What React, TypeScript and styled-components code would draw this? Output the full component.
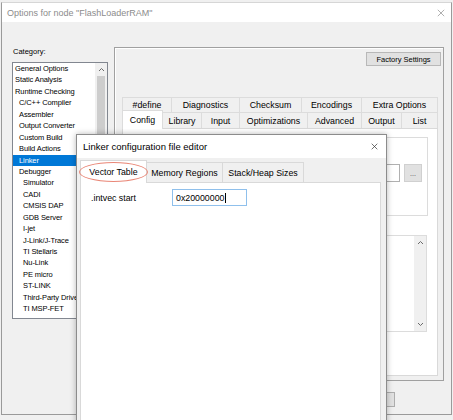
import React from 'react'
import styled, { createGlobalStyle } from 'styled-components'

const GlobalStyle = createGlobalStyle`
  html, body { margin: 0; padding: 0; }
  body {
    width: 453px;
    height: 420px;
    overflow: hidden;
    background: #f0f0f0;
    font-family: 'Liberation Sans', Arial, sans-serif;
    color: #000;
  }
  * { box-sizing: border-box; }
`

const Root = styled.div`
  position: relative;
  width: 453px;
  height: 420px;
  overflow: hidden;
  padding-top: 2px;
`

const Window = styled.div`
  width: 451px;
  height: 413px;
  margin-left: 1px;
  border: 1px solid #9a9a9a;
  border-top-color: #d6d6d6;
  background: #f0f0f0;
  display: flex;
  flex-direction: column;
`

const TitleBar = styled.div`
  height: 19px;
  flex: none;
  background: #fff;
  display: flex;
  align-items: center;
  justify-content: space-between;
  padding: 0 6px 0 5px;
  font-size: 9px;
  color: #8c8c8c;
`

const Body = styled.div`
  flex: 1;
  display: flex;
  flex-direction: column;
  padding: 25px 7px 0 10px;
`

const MainRow = styled.div`
  display: flex;
  gap: 6px;
`

const LeftCol = styled.div`
  width: 96px;
  display: flex;
  flex-direction: column;
`

const SmallLabel = styled.div`
  font-size: 7.5px;
  line-height: 10px;
  margin: 0 0 5px 1px;
`

const ListBox = styled.div`
  height: 257px;
  border: 1px solid #828790;
  background: #fff;
  display: flex;
`

const Items = styled.div`
  flex: 1;
  min-width: 0;
  overflow: hidden;
`

const Item = styled.div<{ $level: number; $selected?: boolean }>`
  height: 11.45px;
  line-height: 11.45px;
  font-size: 7.5px;
  letter-spacing: -0.1px;
  white-space: nowrap;
  padding-left: ${p => 2 + p.$level * 4}px;
  background: ${p => (p.$selected ? '#0078d7' : 'transparent')};
  color: ${p => (p.$selected ? '#fff' : '#000')};
`

const ScrollBar = styled.div<{ $height?: number }>`
  width: 12px;
  flex: none;
  background: #f0f0f0;
  display: flex;
  flex-direction: column;
  align-items: stretch;
`

const ScrollArrow = styled.div`
  height: 13px;
  flex: none;
  display: flex;
  align-items: center;
  justify-content: center;
`

const Thumb = styled.div<{ $h: number }>`
  height: ${p => p.$h}px;
  margin: 0 2px;
  background: #cdcdcd;
  flex: none;
`

const Spacer = styled.div`
  flex: 1;
`

const Frame = styled.div`
  width: 330px;
  height: 334px;
  border: 1px solid #a0a0a0;
  box-shadow: inset 1px 1px 0 #fff;
  padding: 4px 2px 0 7px;
  display: flex;
  flex-direction: column;
`

const FactoryButton = styled.div`
  align-self: flex-end;
  width: 75px;
  height: 14px;
  background: #e1e1e1;
  border: 1px solid #b8b8b8;
  font-size: 7.5px;
  display: flex;
  align-items: center;
  justify-content: center;
`

const TabControl = styled.div`
  margin-top: 31px;
  width: 316px;
  display: flex;
  flex-direction: column;
`

const TabRow = styled.div<{ $h: number }>`
  display: flex;
  height: ${p => p.$h}px;
  align-items: flex-end;
`

const Tab = styled.div<{ $w: number; $active?: boolean; $h: number }>`
  width: ${p => p.$w}px;
  height: ${p => (p.$active ? p.$h + 3 : p.$h)}px;
  margin-bottom: ${p => (p.$active ? -1 : 0)}px;
  position: relative;
  z-index: ${p => (p.$active ? 1 : 0)};
  background: ${p => (p.$active ? '#fff' : '#f0f0f0')};
  border: 1px solid #dcdcdc;
  border-bottom: none;
  margin-left: -1px;
  &:first-child { margin-left: 0; }
  font-size: 8.8px;
  display: flex;
  align-items: center;
  justify-content: center;
  white-space: nowrap;
`

const Page = styled.div`
  height: 248px;
  background: #fff;
  border: 1px solid #d9d9d9;
  padding: 4px 9px 0 4px;
  display: flex;
  flex-direction: column;
`

const Group = styled.fieldset`
  margin: 0;
  width: 301px;
  border: 1px solid #dcdcdc;
  padding: 0 5px 33px 6px;
  legend {
    font-size: 7.5px;
    padding: 0 2px;
    line-height: 9px;
  }
`

const FieldRow = styled.div`
  display: flex;
  gap: 4px;
  margin-top: 22px;
  height: 18px;
`

const TextField = styled.div`
  flex: 1;
  border: 1px solid #b0b0b0;
  background: #fff;
`

const SmallButton = styled.div`
  width: 18px;
  background: #e1e1e1;
  border: 1px solid #d0d0d0;
  font-size: 7px;
  display: flex;
  align-items: center;
  justify-content: center;
  color: #444;
`

const TextArea = styled.div`
  margin-top: 19px;
  width: 300px;
  height: 97px;
  border: 1px solid #dcdcdc;
  display: flex;
  justify-content: flex-end;
`

const ButtonRow = styled.div`
  display: flex;
  justify-content: flex-end;
  padding-right: 49px;
  margin-top: 11px;
`

const PushButton = styled.div`
  width: 70px;
  height: 15px;
  background: #e1e1e1;
  border: 1px solid #adadad;
  font-size: 7.5px;
  display: flex;
  align-items: center;
  justify-content: center;
`

/* modal dialog lying over the options window */
const Dialog = styled.div`
  position: absolute;
  left: 76px;
  top: 134px;
  width: 311px;
  height: 300px;
  background: #f0f0f0;
  border: 1px solid #8c8c8c;
  box-shadow: 0 0 6px rgba(0, 0, 0, 0.28);
  display: flex;
  flex-direction: column;
`

const DialogTitle = styled.div`
  height: 23px;
  flex: none;
  background: #fff;
  display: flex;
  align-items: center;
  justify-content: space-between;
  padding: 0 8px 0 6px;
  font-size: 9.5px;
`

const DialogTabs = styled.div`
  height: 24px;
  flex: none;
  display: flex;
  align-items: flex-end;
  padding-left: 3px;
`

const DTab = styled.div<{ $w: number; $active?: boolean }>`
  width: ${p => p.$w}px;
  height: ${p => (p.$active ? 23 : 20)}px;
  margin-bottom: ${p => (p.$active ? -1 : 0)}px;
  position: relative;
  z-index: ${p => (p.$active ? 1 : 0)};
  background: ${p => (p.$active ? '#fff' : '#f0f0f0')};
  border: 1px solid #d9d9d9;
  border-bottom: none;
  margin-left: -1px;
  &:first-child { margin-left: 0; }
  font-size: 8.8px;
  display: flex;
  align-items: center;
  justify-content: center;
  white-space: nowrap;
`

const DialogPage = styled.div`
  flex: 1;
  margin: 0 5px 0 3px;
  background: #fff;
  border: 1px solid #d9d9d9;
  padding: 6px 0 0 10px;
`

const FormRow = styled.div`
  display: flex;
  align-items: center;
  height: 17px;
`

const FormLabel = styled.div`
  width: 81px;
  font-size: 8.8px;
`

const HexInput = styled.div`
  width: 75px;
  height: 17px;
  border: 1px solid #8fc0ec;
  font-size: 8.8px;
  padding-left: 3px;
  display: flex;
  align-items: center;
`

const Caret = styled.span`
  display: inline-block;
  width: 1px;
  height: 10px;
  background: #000;
  margin-left: 1px;
`

const Annotation = styled.div`
  position: absolute;
  left: 2px;
  top: 27px;
  width: 69px;
  height: 20px;
  border: 1px solid #e98676;
  border-radius: 50%;
  z-index: 3;
  pointer-events: none;
`

const CloseIcon = ({ color, size }: { color: string; size: number }) => (
  <svg width={size} height={size} viewBox="0 0 10 10">
    <path d="M1 1 L9 9 M9 1 L1 9" stroke={color} strokeWidth="1" fill="none" />
  </svg>
)

const Chevron = ({ up }: { up?: boolean }) => (
  <svg width="7" height="5" viewBox="0 0 7 5">
    <path
      d={up ? 'M1 4 L3.5 1.5 L6 4' : 'M1 1 L3.5 3.5 L6 1'}
      stroke="#6b6b6b"
      strokeWidth="1"
      fill="none"
    />
  </svg>
)

const categories: [string, number][] = [
  ['General Options', 0],
  ['Static Analysis', 0],
  ['Runtime Checking', 0],
  ['C/C++ Compiler', 1],
  ['Assembler', 1],
  ['Output Converter', 1],
  ['Custom Build', 1],
  ['Build Actions', 1],
  ['Linker', 1],
  ['Debugger', 1],
  ['Simulator', 2],
  ['CADI', 2],
  ['CMSIS DAP', 2],
  ['GDB Server', 2],
  ['I-jet', 2],
  ['J-Link/J-Trace', 2],
  ['TI Stellaris', 2],
  ['Nu-Link', 2],
  ['PE micro', 2],
  ['ST-LINK', 2],
  ['Third-Party Driver', 2],
  ['TI MSP-FET', 2],
]

const backTabs: [string, number][] = [
  ['#define', 50],
  ['Diagnostics', 69],
  ['Checksum', 63],
  ['Encodings', 61],
  ['Extra Options', 77],
]

const frontTabs: [string, number][] = [
  ['Config', 41],
  ['Library', 40],
  ['Input', 39],
  ['Optimizations', 69],
  ['Advanced', 55],
  ['Output', 41],
  ['List', 37],
]

const dialogTabs: [string, number][] = [
  ['Vector Table', 67],
  ['Memory Regions', 77],
  ['Stack/Heap Sizes', 82],
]

export default function App() {
  return (
    <Root>
      <GlobalStyle />
      <Window>
        <TitleBar>
          <span>Options for node "FlashLoaderRAM"</span>
          <CloseIcon color="#9a9a9a" size={8} />
        </TitleBar>
        <Body>
          <MainRow>
            <LeftCol>
              <SmallLabel>Category:</SmallLabel>
              <ListBox>
                <Items>
                  {categories.map(([name, level]) => (
                    <Item key={name} $level={level} $selected={name === 'Linker'}>
                      {name}
                    </Item>
                  ))}
                </Items>
                <ScrollBar>
                  <ScrollArrow>
                    <Chevron up />
                  </ScrollArrow>
                  <Thumb $h={214} />
                  <Spacer />
                  <ScrollArrow>
                    <Chevron />
                  </ScrollArrow>
                </ScrollBar>
              </ListBox>
            </LeftCol>

            <Frame>
              <FactoryButton>Factory Settings</FactoryButton>
              <TabControl>
                <TabRow $h={15}>
                  {backTabs.map(([t, w]) => (
                    <Tab key={t} $w={w} $h={15}>
                      {t}
                    </Tab>
                  ))}
                </TabRow>
                <TabRow $h={16}>
                  {frontTabs.map(([t, w]) => (
                    <Tab key={t} $w={w} $h={16} $active={t === 'Config'}>
                      {t}
                    </Tab>
                  ))}
                </TabRow>
                <Page>
                  <Group>
                    <legend>Linker configuration file</legend>
                    <FieldRow>
                      <TextField />
                      <SmallButton>...</SmallButton>
                    </FieldRow>
                  </Group>
                  <TextArea>
                    <ScrollBar>
                      <ScrollArrow>
                        <Chevron up />
                      </ScrollArrow>
                      <Spacer />
                      <ScrollArrow>
                        <Chevron />
                      </ScrollArrow>
                    </ScrollBar>
                  </TextArea>
                </Page>
              </TabControl>
            </Frame>
          </MainRow>
          <ButtonRow>
            <PushButton>OK</PushButton>
          </ButtonRow>
        </Body>
      </Window>

      <Dialog>
        <DialogTitle>
          <span>Linker configuration file editor</span>
          <CloseIcon color="#333" size={7} />
        </DialogTitle>
        <DialogTabs>
          {dialogTabs.map(([t, w]) => (
            <DTab key={t} $w={w} $active={t === 'Vector Table'}>
              {t}
            </DTab>
          ))}
        </DialogTabs>
        <DialogPage>
          <FormRow>
            <FormLabel>.intvec start</FormLabel>
            <HexInput>
              0x20000000
              <Caret />
            </HexInput>
          </FormRow>
        </DialogPage>
        <Annotation />
      </Dialog>
    </Root>
  )
}
